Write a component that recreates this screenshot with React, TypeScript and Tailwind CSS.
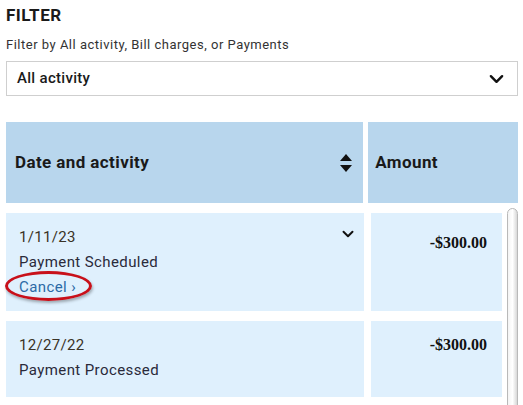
const rows = [
  { date: '1/11/23', label: 'Payment Scheduled', amount: '-$300.00', cancel: true },
  { date: '12/27/22', label: 'Payment Processed', amount: '-$300.00', cancel: false },
]

function Chevron({ className }: { className?: string }) {
  return (
    <svg viewBox="0 0 16 10" className={className} fill="none" stroke="currentColor" strokeWidth="2.6" strokeLinecap="round" strokeLinejoin="round">
      <path d="M2 2l6 6 6-6" />
    </svg>
  )
}

function SortIcon() {
  return (
    <svg viewBox="0 0 14 20" className="w-[14px] h-[20px]" fill="#111">
      <path d="M7 1L13 8H1z" />
      <path d="M7 19L13 12H1z" />
    </svg>
  )
}

export default function App() {
  return (
    <div className="w-[523px] h-[405px] overflow-hidden bg-white text-[#222] pl-[6px] pr-[5px]" style={{ fontFamily: 'Roboto, "Noto Sans", sans-serif' }}>
      <h2 className="pt-[4px] text-[17px] leading-[22px] font-bold tracking-[0.5px] text-[#1a1a1a]">FILTER</h2>
      <p className="mt-[11px] text-[13px] leading-[16px] tracking-[0.5px] text-[#333]">Filter by All activity, Bill charges, or Payments</p>

      {/* Select */}
      <div className="mt-[8px] h-[35px] border border-[#cfcfcf] flex items-center justify-between pl-[10px] pr-[13px]">
        <span className="text-[15px] font-medium tracking-[0.3px] text-[#1a1a1a]">All activity</span>
        <Chevron className="w-[15px] h-[10px] text-[#111]" />
      </div>

      {/* Header */}
      <div className="mt-[26px] flex gap-[5px] h-[81px]">
        <div className="w-[358px] bg-[#b8d6ed] flex items-center justify-between pl-[9px] pr-[10px]">
          <span className="text-[17px] font-bold tracking-[0.4px] text-[#1a1a1a]">Date and activity</span>
          <SortIcon />
        </div>
        <div className="w-[150px] bg-[#b8d6ed] flex items-center pl-[7px]">
          <span className="text-[17px] font-bold tracking-[0.4px] text-[#1a1a1a]">Amount</span>
        </div>
      </div>

      {/* Body */}
      <div className="mt-[5px] flex gap-[5px]">
        <div className="flex flex-col gap-[10px] pt-[5px]">
          {rows.map((r) => (
            <div key={r.date} className="flex gap-[7px]">
              <div className={`relative w-[358px] bg-[#dff0fd] pl-[13px] pr-[10px] pt-[12px] ${r.cancel ? 'pb-[11px]' : 'pb-[14px]'}`}>
                <div className="text-[15px] leading-[25px] tracking-[0.3px] text-[#3a3326]">{r.date}</div>
                <div className="text-[15px] leading-[25px] tracking-[0.4px] text-[#2a2a3a]">{r.label}</div>
                {r.cancel && (
                  <>
                    <div className="text-[15px] leading-[25px] tracking-[0.4px] text-[#2c6aa6]">Cancel &#x203A;</div>
                    <Chevron className="absolute left-[336px] top-[17px] w-[12px] h-[8px] text-[#111]" />
                    <div className="absolute left-[-1px] top-[58px] w-[87px] h-[30px] rounded-[50%] border-[3.5px] border-[#c8101a] shadow-[1px_2px_3px_rgba(0,0,0,0.3)]" />
                  </>
                )}
              </div>
              <div className={`w-[131px] bg-[#dff0fd] text-right pr-[15px] ${r.cancel ? 'pt-[18px]' : 'pt-[12px]'}`}>
                <span className="text-[16px] leading-[20px] font-bold text-[#111]" style={{ fontFamily: '"Liberation Serif", serif' }}>{r.amount}</span>
              </div>
            </div>
          ))}
        </div>
        {/* Scrollbar */}
        <div className="w-[11px] h-[200px] rounded-t-[6px] border border-[#b9b9b9] bg-gradient-to-r from-[#f4f4f4] via-[#ffffff] to-[#d8d8d8]" />
      </div>
    </div>
  )
}
